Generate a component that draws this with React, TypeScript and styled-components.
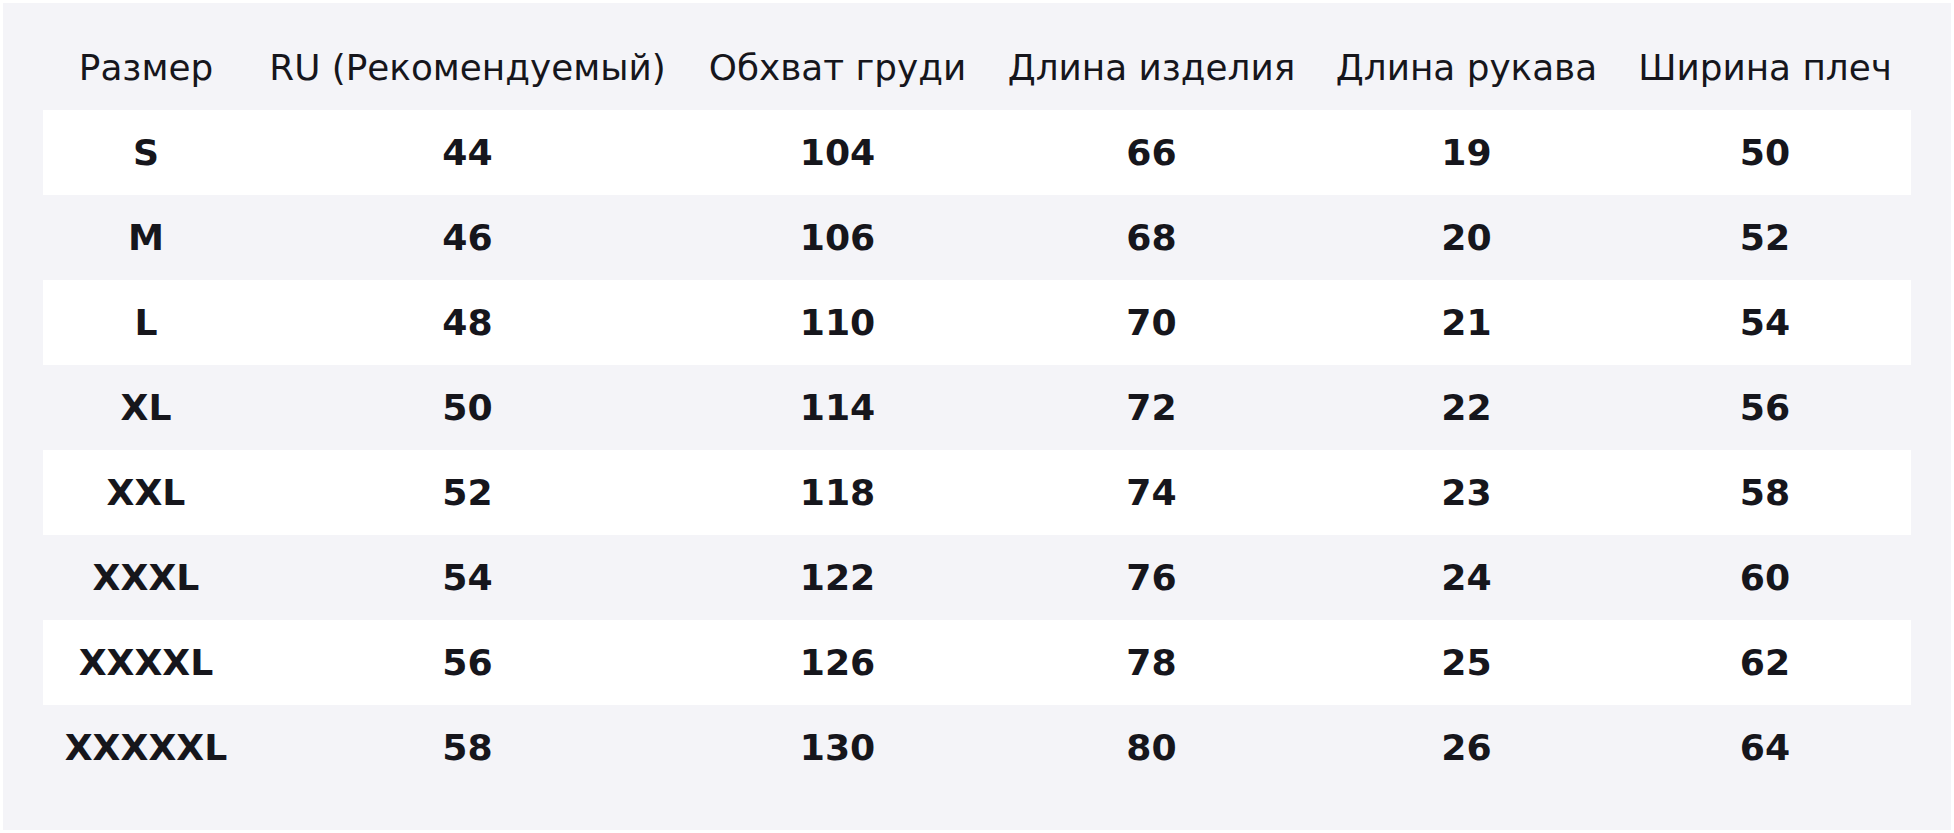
import React from "react";
import styled, { createGlobalStyle } from "styled-components";

const Global = createGlobalStyle`
  html, body { margin: 0; padding: 0; background: #ffffff; }
  body { font-family: "DejaVu Sans", "Noto Sans", sans-serif; }
`;

const Panel = styled.div`
  margin: 3px;
  height: 827px;
  box-sizing: border-box;
  padding: 22px 40px 40px;
  background: #f4f4f8;
`;

const Table = styled.table`
  width: 100%;
  table-layout: fixed;
  border-collapse: collapse;
  border-spacing: 0;
`;

const Col = styled.col<{ $w: number }>`
  width: ${(p) => p.$w}px;
`;

const HeadCell = styled.th`
  height: 85px;
  padding: 0;
  font-size: 35.8px;
  font-weight: 400;
  color: #16161c;
  text-align: center;
  white-space: nowrap;
`;

const Row = styled.tr<{ $odd: boolean }>`
  background: ${(p) => (p.$odd ? "#ffffff" : "transparent")};
`;

const Cell = styled.td`
  height: 85px;
  padding: 0;
  font-size: 36.2px;
  font-weight: 700;
  color: #16161c;
  text-align: center;
  white-space: nowrap;
`;

const widths = [206, 437, 303, 325, 305, 292];

const headers = [
  "Размер",
  "RU (Рекомендуемый)",
  "Обхват груди",
  "Длина изделия",
  "Длина рукава",
  "Ширина плеч",
];

const rows: (string | number)[][] = [
  ["S", 44, 104, 66, 19, 50],
  ["M", 46, 106, 68, 20, 52],
  ["L", 48, 110, 70, 21, 54],
  ["XL", 50, 114, 72, 22, 56],
  ["XXL", 52, 118, 74, 23, 58],
  ["XXXL", 54, 122, 76, 24, 60],
  ["XXXXL", 56, 126, 78, 25, 62],
  ["XXXXXL", 58, 130, 80, 26, 64],
];

export default function App() {
  return (
    <>
      <Global />
      <Panel>
        <Table>
          <colgroup>
            {widths.map((w, i) => (
              <Col key={i} $w={w} />
            ))}
          </colgroup>
          <thead>
            <tr>
              {headers.map((h) => (
                <HeadCell key={h}>{h}</HeadCell>
              ))}
            </tr>
          </thead>
          <tbody>
            {rows.map((r, i) => (
              <Row key={i} $odd={i % 2 === 0}>
                {r.map((c, j) => (
                  <Cell key={j}>{c}</Cell>
                ))}
              </Row>
            ))}
          </tbody>
        </Table>
      </Panel>
    </>
  );
}
